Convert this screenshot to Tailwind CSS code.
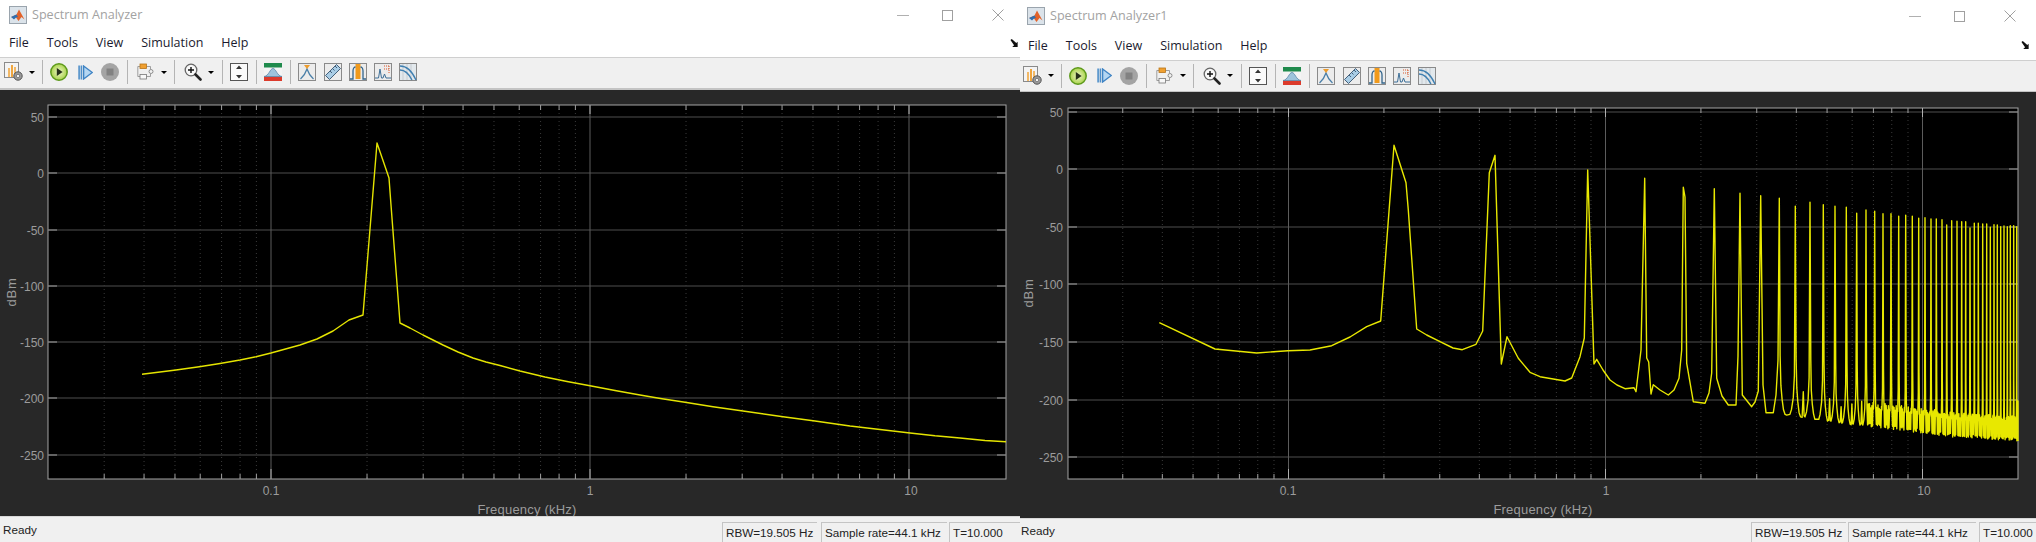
<!DOCTYPE html>
<html lang="en">

<head>
  <meta charset="UTF-8" />
  <script src="https://cdn.jsdelivr.net/npm/@tailwindcss/browser@4"></script>
  <title>Spectrum Analyzer</title>
</head>

<body class="bg-white overflow-hidden">
  <!-- toolbar icons -->
  <svg class="absolute w-0 h-0">
    <defs>
      <radialGradient id="greenFill"><stop offset="0" stop-color="#eef7c8" /><stop offset="1" stop-color="#a9d24a" /></radialGradient>
      <symbol id="i-params" viewBox="0 0 20 20">
        <rect x="0.5" y="0.5" width="14" height="15" fill="#f4f4f4" stroke="#8a8a8a" />
        <rect x="4" y="6" width="2" height="9" fill="#f2b866" /><rect x="7" y="3" width="2" height="12" fill="#efa640" /><rect x="10" y="5" width="2" height="10" fill="#f2b866" />
        <circle cx="14" cy="14" r="4.2" fill="#9a9a9a" stroke="#555" /><circle cx="14" cy="14" r="1.6" fill="#fff" stroke="#555" stroke-width="0.6" />
      </symbol>
      <symbol id="i-play" viewBox="0 0 18 18">
        <circle cx="9" cy="9" r="8.2" fill="url(#greenFill)" stroke="#5e9a1c" stroke-width="1.5" />
        <path d="M6.8 5 12.6 9 6.8 13z" fill="#26301a" />
      </symbol>
      <symbol id="i-step" viewBox="0 0 15 15">
        <rect x="0.3" y="0.5" width="1.6" height="14" fill="#4f8fc9" /><rect x="2.6" y="0.5" width="1.6" height="14" fill="#4f8fc9" />
        <path d="M5.6 1 14.3 7.5 5.6 14z" fill="#b4d6f2" stroke="#3f84c4" stroke-width="1.4" />
      </symbol>
      <symbol id="i-stop" viewBox="0 0 18 18">
        <circle cx="9" cy="9" r="9" fill="#a4a4a4" /><rect x="5.5" y="5.5" width="7" height="7" fill="#828282" />
      </symbol>
      <symbol id="i-blocks" viewBox="0 0 18 18">
        <path d="M3 3.5H0.8v10H3M9.500 3.500h4V6M9.500 13.500h4V11" fill="none" stroke="#8a8a8a" stroke-width="0.800" />
        <rect x="3" y="1" width="6.500" height="4.500" fill="#f0a030" stroke="#b87418" stroke-width="0.800" />
        <rect x="3" y="11.500" width="6.500" height="4.500" fill="#f8f8f8" stroke="#777" stroke-width="0.800" />
        <circle cx="14" cy="8.500" r="2" fill="#f2f2f2" stroke="#777" stroke-width="0.800" />
      </symbol>
      <symbol id="i-zoom" viewBox="0 0 18 18">
        <circle cx="7" cy="7" r="5.8" fill="#f8f8f8" stroke="#666" stroke-width="1.3" />
        <path d="M4 7h6M7 4v6" stroke="#111" stroke-width="1.4" />
        <path d="M11.5 11.5 16.5 16.5" stroke="#222" stroke-width="2.6" stroke-linecap="round" />
      </symbol>
      <symbol id="i-fit" viewBox="0 0 18 18">
        <rect x="0.5" y="0.5" width="17" height="17" fill="#fafafa" stroke="#555" />
        <path d="M9 2.5 12 6H6zM9 15.5 12 12H6z" fill="#333" />
      </symbol>
      <symbol id="i-style" viewBox="0 0 18 18">
        <rect width="18" height="18" fill="#f4f4f4" />
        <rect width="18" height="4.5" fill="#1f8a4c" /><rect y="13.5" width="18" height="4.5" fill="#dc3b2c" />
        <path d="M0 13.5C5 13 6 5.5 9 5.5s4 7.500 9 8z" fill="#9ec4dc" stroke="#5a87a8" stroke-width="0.8" />
      </symbol>
      <symbol id="i-peak" viewBox="0 0 18 18">
        <rect x="0.5" y="0.5" width="17" height="17" fill="#ececec" stroke="#8a8a8a" />
        <path d="M2.500 16C6 13 8 9 9 6c1 3 3 7 6.500 10" fill="none" stroke="#4a7fa8" stroke-width="1.300" />
        <path d="M6 2h6L9 6z" fill="#ee9c2c" />
      </symbol>
      <symbol id="i-ruler" viewBox="0 0 18 18">
        <rect x="0.5" y="0.5" width="17" height="17" fill="#ececec" stroke="#8a8a8a" />
        <path d="M1.500 12.500 12.500 1.500 16.500 5.500 5.500 16.500z" fill="#a9cde6" stroke="#44607a" />
        <path d="M6 8l2 2M8.500 5.500l2 2M11 3l2 2" stroke="#44607a" />
      </symbol>
      <symbol id="i-band" viewBox="0 0 18 18">
        <rect x="0.5" y="0.5" width="17" height="17" fill="#ececec" stroke="#8a8a8a" />
        <rect x="6.500" y="1" width="5" height="15" fill="#f09a1c" />
        <path d="M1 16H4V8C4 5 5.500 4 6.500 4M17 16H14V8C14 5 12.500 4 11.500 4" fill="none" stroke="#33658c" stroke-width="1.300" />
      </symbol>
      <symbol id="i-cursor" viewBox="0 0 18 18">
        <rect x="0.5" y="0.5" width="17" height="17" fill="#ececec" stroke="#8a8a8a" />
        <path d="M1 15h3.500L6 6l1.500 9H9l1.500-4 1.500 4h5" fill="none" stroke="#3d6f98" />
        <path d="M10 3h6M10 6h6M15 3v8" stroke="#d9572b" stroke-dasharray="1 1" />
      </symbol>
      <symbol id="i-ccdf" viewBox="0 0 18 18">
        <rect x="0.5" y="0.5" width="17" height="17" fill="#e2e8ec" stroke="#8a8a8a" />
        <path d="M4 1v16M8 1v16M12 1v16" stroke="#c6ccd2" />
        <path d="M1 3c7 0 12 5 16 14M1 7c5 0 9 4 12 10" fill="none" stroke="#3f7fb0" stroke-width="1.300" />
      </symbol>
      <symbol id="i-resize" viewBox="0 0 10 10">
        <path d="M0.500 1 2 0 7 4.500 8.500 3V9H2.500L4.500 7z" fill="#111" />
      </symbol>
    </defs>
  </svg>

  <div class="flex w-[2036px] h-[542px] font-['Open_Sans',sans-serif]">

    <!-- left window -->
    <div class="flex flex-col w-[1020px] h-[542px]">
      <div class="flex items-center h-[30px] shrink-0 pl-[9px]">
        <svg class="w-[18px] h-[18px]" viewBox="0 0 18 18">
          <rect x="0.500" y="0.500" width="17" height="17" fill="#dbe3ea" stroke="#9aa4ad" />
          <path d="M2 11 7.500 8.500 10 3.500 15.500 13.500 12.500 11 9.500 15 7 11.500z" fill="#e2622a" />
          <path d="M2 11 7.500 8.500 9 11 7 11.500 5 13.500z" fill="#2f6fb0" />
        </svg>
        <span class="ml-[5px] text-[12.600px] text-[#a2a2a2]">Spectrum Analyzer</span>
        <div class="flex items-center ml-auto">
          <div class="w-[12px] h-px bg-[#b0b0b0] mr-[33px]"></div>
          <div class="w-[11px] h-[11px] border border-[#a0a0a0] mr-[39px]"></div>
          <svg class="w-[12px] h-[12px] mr-[16px]" viewBox="0 0 12 12"><path d="M0.500 0.500 11.500 11.500M11.500 0.500 0.500 11.500" stroke="#a0a0a0" /></svg>
        </div>
      </div>
      <div class="flex items-center h-[27px] shrink-0 pl-[9px] gap-[18px] text-[12.500px] text-[#1a1a2e] relative">
        <span>File</span><span>Tools</span><span>View</span><span>Simulation</span><span>Help</span>
        <svg class="absolute right-[1px] top-[9px] w-[9px] h-[9px]"><use href="#i-resize" /></svg>
      </div>
      <div class="flex items-center h-[31px] shrink-0 bg-[#f0f0f0] border-t border-[#cfcfcf] pl-[4px] pb-[2px]">
        <svg class="w-[20px] h-[20px]"><use href="#i-params" /></svg>
        <div class="ml-[5px] w-0 h-0 border-x-[3px] border-x-transparent border-t-[3px] border-t-black"></div>
        <div class="ml-[7px] w-px h-[24px] bg-[#b4b4b4]"></div>
        <svg class="ml-[7px] w-[18px] h-[18px]"><use href="#i-play" /></svg>
        <svg class="ml-[10px] w-[15px] h-[15px]"><use href="#i-step" /></svg>
        <svg class="ml-[8px] w-[18px] h-[18px]"><use href="#i-stop" /></svg>
        <div class="ml-[8px] w-px h-[24px] bg-[#b4b4b4]"></div>
        <svg class="ml-[9px] w-[18px] h-[18px]"><use href="#i-blocks" /></svg>
        <div class="ml-[6px] w-0 h-0 border-x-[3px] border-x-transparent border-t-[3px] border-t-black"></div>
        <div class="ml-[7px] w-px h-[24px] bg-[#b4b4b4]"></div>
        <svg class="ml-[9px] w-[18px] h-[18px]"><use href="#i-zoom" /></svg>
        <div class="ml-[6px] w-0 h-0 border-x-[3px] border-x-transparent border-t-[3px] border-t-black"></div>
        <div class="ml-[8px] w-px h-[24px] bg-[#b4b4b4]"></div>
        <svg class="ml-[7px] w-[18px] h-[18px]"><use href="#i-fit" /></svg>
        <div class="ml-[8px] w-px h-[24px] bg-[#b4b4b4]"></div>
        <svg class="ml-[7px] w-[18px] h-[18px]"><use href="#i-style" /></svg>
        <div class="ml-[8px] w-px h-[24px] bg-[#b4b4b4]"></div>
        <svg class="ml-[7px] w-[18px] h-[18px]"><use href="#i-peak" /></svg>
        <svg class="ml-[8px] w-[18px] h-[18px]"><use href="#i-ruler" /></svg>
        <svg class="ml-[7px] w-[18px] h-[18px]"><use href="#i-band" /></svg>
        <svg class="ml-[7px] w-[18px] h-[18px]"><use href="#i-cursor" /></svg>
        <svg class="ml-[7px] w-[18px] h-[18px]"><use href="#i-ccdf" /></svg>
      </div>
      <div class="h-[2px] shrink-0 bg-[#c4c4c4]"></div>
      <div class="h-[426px] shrink-0 bg-[#282828]">
        <svg id="plotL" class="block w-full h-full font-['Liberation_Sans',sans-serif] text-[12px]" viewBox="0 90 1020 426" fill="#9c9c9c">
          <g id="gridL"></g>
          <path id="traceL" fill="none" stroke="#e4e400" stroke-width="1.400" stroke-linejoin="round" />
          <g text-anchor="end" dominant-baseline="central">
            <text x="44" y="118">50</text><text x="44" y="174">0</text><text x="44" y="231">-50</text>
            <text x="44" y="287">-100</text><text x="44" y="343">-150</text><text x="44" y="399">-200</text><text x="44" y="456">-250</text>
          </g>
          <g text-anchor="middle" dominant-baseline="central">
            <text x="271" y="491">0.1</text><text x="590" y="491">1</text><text x="911" y="491">10</text>
            <text class="text-[13px]" x="527" y="509" letter-spacing="0.200">Frequency (kHz)</text>
            <text class="text-[13px]" transform="translate(11 292) rotate(-90)" letter-spacing="0.800">dBm</text>
          </g>
        </svg>
      </div>
      <div class="flex items-end h-[26px] shrink-0 bg-[#f0f0f0] border-t border-[#d8d8d8] text-[11.700px] text-[#222] whitespace-nowrap font-['Liberation_Sans',sans-serif]">
        <span class="self-center pl-[3px] mr-auto">Ready</span>
        <div class="w-[95px] h-[20px] leading-[19px] pl-[3px] border-l border-t border-[#c4c4c4]">RBW=19.505 Hz</div>
        <div class="ml-[4px] w-[126px] h-[20px] leading-[19px] pl-[3px] border-l border-t border-[#c4c4c4]">Sample rate=44.1 kHz</div>
        <div class="ml-[2px] w-[71px] h-[20px] leading-[19px] pl-[3px] border-l border-t border-[#c4c4c4]">T=10.000</div>
      </div>
    </div>

    <!-- right window -->
    <div class="flex flex-col flex-1 h-[542px]">
      <div class="flex items-center h-[32px] shrink-0 pl-[7px]">
        <svg class="w-[18px] h-[18px]" viewBox="0 0 18 18">
          <rect x="0.500" y="0.500" width="17" height="17" fill="#dbe3ea" stroke="#9aa4ad" />
          <path d="M2 11 7.500 8.500 10 3.500 15.500 13.500 12.500 11 9.500 15 7 11.500z" fill="#e2622a" />
          <path d="M2 11 7.500 8.500 9 11 7 11.500 5 13.500z" fill="#2f6fb0" />
        </svg>
        <span class="ml-[5px] text-[12.600px] text-[#a2a2a2]">Spectrum Analyzer1</span>
        <div class="flex items-center ml-auto">
          <div class="w-[12px] h-px bg-[#b0b0b0] mr-[33px]"></div>
          <div class="w-[11px] h-[11px] border border-[#a0a0a0] mr-[39px]"></div>
          <svg class="w-[12px] h-[12px] mr-[20px]" viewBox="0 0 12 12"><path d="M0.500 0.500 11.500 11.500M11.500 0.500 0.500 11.500" stroke="#a0a0a0" /></svg>
        </div>
      </div>
      <div class="flex items-center h-[28px] shrink-0 pl-[8px] gap-[18px] text-[12.500px] text-[#1a1a2e] relative">
        <span>File</span><span>Tools</span><span>View</span><span>Simulation</span><span>Help</span>
        <svg class="absolute right-[6px] top-[9px] w-[9px] h-[9px]"><use href="#i-resize" /></svg>
      </div>
      <div class="flex items-center h-[31px] shrink-0 bg-[#f0f0f0] border-t border-[#cfcfcf] pl-[3px] pb-[1px]">
        <svg class="w-[20px] h-[20px]"><use href="#i-params" /></svg>
        <div class="ml-[5px] w-0 h-0 border-x-[3px] border-x-transparent border-t-[3px] border-t-black"></div>
        <div class="ml-[7px] w-px h-[24px] bg-[#b4b4b4]"></div>
        <svg class="ml-[7px] w-[18px] h-[18px]"><use href="#i-play" /></svg>
        <svg class="ml-[10px] w-[15px] h-[15px]"><use href="#i-step" /></svg>
        <svg class="ml-[8px] w-[18px] h-[18px]"><use href="#i-stop" /></svg>
        <div class="ml-[8px] w-px h-[24px] bg-[#b4b4b4]"></div>
        <svg class="ml-[9px] w-[18px] h-[18px]"><use href="#i-blocks" /></svg>
        <div class="ml-[6px] w-0 h-0 border-x-[3px] border-x-transparent border-t-[3px] border-t-black"></div>
        <div class="ml-[7px] w-px h-[24px] bg-[#b4b4b4]"></div>
        <svg class="ml-[9px] w-[18px] h-[18px]"><use href="#i-zoom" /></svg>
        <div class="ml-[6px] w-0 h-0 border-x-[3px] border-x-transparent border-t-[3px] border-t-black"></div>
        <div class="ml-[8px] w-px h-[24px] bg-[#b4b4b4]"></div>
        <svg class="ml-[7px] w-[18px] h-[18px]"><use href="#i-fit" /></svg>
        <div class="ml-[8px] w-px h-[24px] bg-[#b4b4b4]"></div>
        <svg class="ml-[7px] w-[18px] h-[18px]"><use href="#i-style" /></svg>
        <div class="ml-[8px] w-px h-[24px] bg-[#b4b4b4]"></div>
        <svg class="ml-[7px] w-[18px] h-[18px]"><use href="#i-peak" /></svg>
        <svg class="ml-[8px] w-[18px] h-[18px]"><use href="#i-ruler" /></svg>
        <svg class="ml-[7px] w-[18px] h-[18px]"><use href="#i-band" /></svg>
        <svg class="ml-[7px] w-[18px] h-[18px]"><use href="#i-cursor" /></svg>
        <svg class="ml-[7px] w-[18px] h-[18px]"><use href="#i-ccdf" /></svg>
      </div>
      <div class="h-[1px] shrink-0 bg-[#c4c4c4]"></div>
      <div class="h-[426px] shrink-0 bg-[#282828]">
        <svg id="plotR" class="block w-full h-full font-['Liberation_Sans',sans-serif] text-[12px]" viewBox="1020 92 1016 426" fill="#9c9c9c">
          <g id="gridR"></g>
          <path id="traceR" fill="none" stroke="#e8e800" stroke-width="1.400" stroke-linejoin="round" />
          <g text-anchor="end" dominant-baseline="central">
            <text x="1063" y="113">50</text><text x="1063" y="170">0</text><text x="1063" y="228">-50</text>
            <text x="1063" y="285">-100</text><text x="1063" y="343">-150</text><text x="1063" y="401">-200</text><text x="1063" y="458">-250</text>
          </g>
          <g text-anchor="middle" dominant-baseline="central">
            <text x="1288" y="491">0.1</text><text x="1606" y="491">1</text><text x="1924" y="491">10</text>
            <text class="text-[13px]" x="1543" y="509" letter-spacing="0.200">Frequency (kHz)</text>
            <text class="text-[13px]" transform="translate(1028 293) rotate(-90)" letter-spacing="0.800">dBm</text>
          </g>
        </svg>
      </div>
      <div class="flex items-end h-[24px] shrink-0 bg-[#f0f0f0] border-t border-[#d8d8d8] text-[11.700px] text-[#222] whitespace-nowrap font-['Liberation_Sans',sans-serif]">
        <span class="self-center pl-[1px] mr-auto">Ready</span>
        <div class="w-[95px] h-[20px] leading-[19px] pl-[3px] border-l border-t border-[#c4c4c4]">RBW=19.505 Hz</div>
        <div class="ml-[2px] w-[128px] h-[20px] leading-[19px] pl-[3px] border-l border-t border-[#c4c4c4]">Sample rate=44.1 kHz</div>
        <div class="ml-[3px] w-[57px] h-[20px] leading-[19px] pl-[3px] border-l border-t border-[#c4c4c4]">T=10.000</div>
      </div>
    </div>
  </div>

  <script>
    const NS = 'http://www.w3.org/2000/svg'

    const line = (g, x1, y1, x2, y2, stroke, dash) => {
      const el = document.createElementNS(NS, 'line')
      el.setAttribute('x1', x1); el.setAttribute('y1', y1)
      el.setAttribute('x2', x2); el.setAttribute('y2', y2)
      el.setAttribute('stroke', stroke)
      if (dash) el.setAttribute('stroke-dasharray', dash)
      g.appendChild(el)
    }

    // p = plot box, tenth = x of 0.1 kHz, decade = px per decade, rows = y of the dB lines
    const drawGrid = (id, p, tenth, decade, rows) => {
      const g = document.getElementById(id)
      const bg = document.createElementNS(NS, 'rect')
      bg.setAttribute('x', p.l); bg.setAttribute('y', p.t)
      bg.setAttribute('width', p.r - p.l); bg.setAttribute('height', p.b - p.t)
      bg.setAttribute('fill', '#000'); bg.setAttribute('stroke', '#a4a4a4')
      g.appendChild(bg)
      rows.forEach(y => {
        line(g, p.l, y, p.r, y, '#4e4e4e')
        line(g, p.l, y, p.l + 9, y, '#a0a0a0')
        line(g, p.r - 9, y, p.r, y, '#a0a0a0')
      })
      for (let dec = -2; dec <= 1; dec++) {
        for (let m = 1; m <= 9; m++) {
          const x = tenth + decade * (dec + 1 + Math.log10(m))
          if (x <= p.l + 1 || x >= p.r - 1) continue
          if (m === 1) {
            line(g, x, p.t, x, p.b, '#5c5c5c')
            line(g, x, p.t, x, p.t + 9, '#b0b0b0')
            line(g, x, p.b - 10, x, p.b, '#b0b0b0')
          } else {
            line(g, x, p.t, x, p.b, '#3a3a3a', '1 3')
            line(g, x, p.t, x, p.t + 5, '#a0a0a0')
            line(g, x, p.b - 5, x, p.b, '#a0a0a0')
          }
        }
      }
    }

    const toPath = pts => 'M' + pts.map(p => p[0].toFixed(1) + ' ' + p[1].toFixed(1)).join('L')

    drawGrid('gridL', { l: 48, r: 1006, t: 105, b: 479 }, 271, 319, [117, 173, 230, 286, 342, 398, 455])
    drawGrid('gridR', { l: 1068, r: 2018, t: 108, b: 479 }, 1288.5, 317, [112, 169, 227, 284, 342, 400, 457])

    document.getElementById('traceL').setAttribute('d', toPath([
      [142, 374.3], [176, 370], [201, 366.5], [220, 363.5], [240, 360], [256, 356.7], [271, 353], [300, 345], [317, 339], [333, 331],
      [349, 320], [363, 315], [377, 143], [389, 178], [391, 205], [400, 323], [410, 328], [423, 335], [432, 339.5], [443, 345],
      [458, 352], [473, 358], [486, 362], [500, 365.5], [520, 371], [545, 377], [567, 381.5], [590, 385.7], [615, 390.5], [640, 395], [662, 398.8], [685, 402.3],
      [713, 406.8], [743, 411], [783, 416.7], [815, 421], [850, 426], [880, 429.5], [910, 433], [935, 435.8], [960, 438], [985, 440.5], [1006, 441.7]
    ]))

    // right trace: low harmonics traced by hand, the dense ones built from the peak list
    const traced = [
      [1159.3, 322.7], [1215, 349], [1256.7, 353], [1288, 350.7], [1310, 350], [1331.7, 345.7], [1350, 337],
      [1366.7, 326.7], [1380.7, 321], [1394, 145.3], [1406, 182.7], [1408.3, 210], [1416.7, 329], [1426.7, 335],
      [1440, 341.7], [1453, 348], [1462.3, 349.7], [1476, 344.3], [1482.7, 331], [1489.3, 172.7], [1495, 155.3],
      [1501.3, 364], [1507, 336.7], [1518.3, 358.3], [1530, 372.3], [1540, 376.7], [1565, 381], [1571.7, 378],
      [1580, 356.7], [1584.3, 338], [1587.7, 170], [1589.5, 225], [1594, 364], [1596.7, 359.3], [1603, 370], [1610, 380], [1617, 385], [1625, 388.7],
      [1634, 387.7], [1636, 391.7], [1641, 350], [1644.7, 178.3], [1646.7, 358], [1648.7, 362], [1651, 394],
      [1653.3, 384.7], [1660, 390], [1668.3, 395], [1674, 390], [1679, 378.3], [1681.7, 350], [1683.3, 187.3], [1685, 197], [1686.7, 363.3],
      [1693.3, 401.7], [1705, 403.3], [1709, 393], [1711.7, 373], [1714.3, 188.7], [1716.7, 378.3], [1722, 396], [1728.3, 405], [1736, 405],
      [1738, 356], [1740, 193.3], [1742.3, 395], [1751.7, 406.7], [1755, 402], [1758.3, 391], [1760.7, 195.7], [1763, 385], [1766, 412.7], [1773.3, 412.7],
      [1776, 395], [1778, 360]
    ]

    const peakXY = [
      [748, 325], [796, 349], [840, 337], [880, 344], [915, 349], [949, 352], [980, 370], [1008, 360], [1034, 364],
      [1059, 371], [1083, 371], [1106, 379], [1127, 376], [1147, 379], [1166, 385], [1185, 383], [1203, 387],
      [1219, 387], [1236, 389], [1250, 405], [1265, 392], [1281, 394], [1295, 395], [1307, 395], [1320, 414],
      [1333, 400], [1345, 400], [1358, 402], [1370, 402], [1381, 412], [1392, 404], [1402, 405], [1412, 410],
      [1422, 408], [1432, 410], [1441, 407], [1451, 407], [1460, 410]
    ].map(p => [1530 + p[0] / 3, 90 + p[1] / 3])

    // bottom of the noise floor, page x against page y
    const floorAt = x => {
      const f = [[1773, 413], [1815, 420], [1850, 425], [1900, 430], [1950, 437], [2018, 441]]
      for (let i = 1; i < f.length; i++) {
        if (x <= f[i][0]) return f[i - 1][1] + (f[i][1] - f[i - 1][1]) * (x - f[i - 1][0]) / (f[i][0] - f[i - 1][0])
      }
      return 441
    }
    const noise = n => { const s = Math.sin(n * 12.9898) * 43758.5453; return s - Math.floor(s) }

    const pts = traced.slice()
    peakXY.forEach((p, i) => {
      pts.push(p)
      const q = peakXY[i + 1] || [2018, 410]
      const d = q[0] - p[0]
      const y = floorAt(p[0] + d / 2)
      const dense = p[0] > 1860
      pts.push([p[0] + Math.min(d * 0.06, 0.8), y - 60])
      pts.push([p[0] + d * 0.1, y - 30])
      if (dense) {
        // solid noise band at the top of the range, swinging between its two edges
        for (let k = 0; k < 11; k++) {
          const swing = k % 2 ? 4 * noise(i * 13 + k) : 18 + 7 * noise(i * 13 + k)
          pts.push([p[0] + d * (0.12 + k * 0.07), y - swing])
        }
      } else {
        pts.push([p[0] + d * 0.17, y - 16])
        pts.push([p[0] + d * 0.26, y - 5 - 2 * noise(i + 50)])
        pts.push([p[0] + d * 0.36, y - 1])
        pts.push([p[0] + d * 0.46, y - 2 * noise(i + 7)])
        // folded smaller peak between the harmonics
        if (i % 2 === 1 || p[0] > 1830) {
          pts.push([p[0] + d * 0.54, y - 14 - 22 * noise(i + 20)])
          pts.push([p[0] + d * 0.6, y - 3 * noise(i + 30)])
        }
        pts.push([p[0] + d * 0.66, y - 1])
        pts.push([p[0] + d * 0.76, y - 6])
      }
      pts.push([p[0] + d * 0.87, y - 18])
      pts.push([p[0] + d * 0.94, y - 40])
    })
    pts.push([2018, 412], [2018, 441])
    document.getElementById('traceR').setAttribute('d', toPath(pts))
  </script>
</body>

</html>
